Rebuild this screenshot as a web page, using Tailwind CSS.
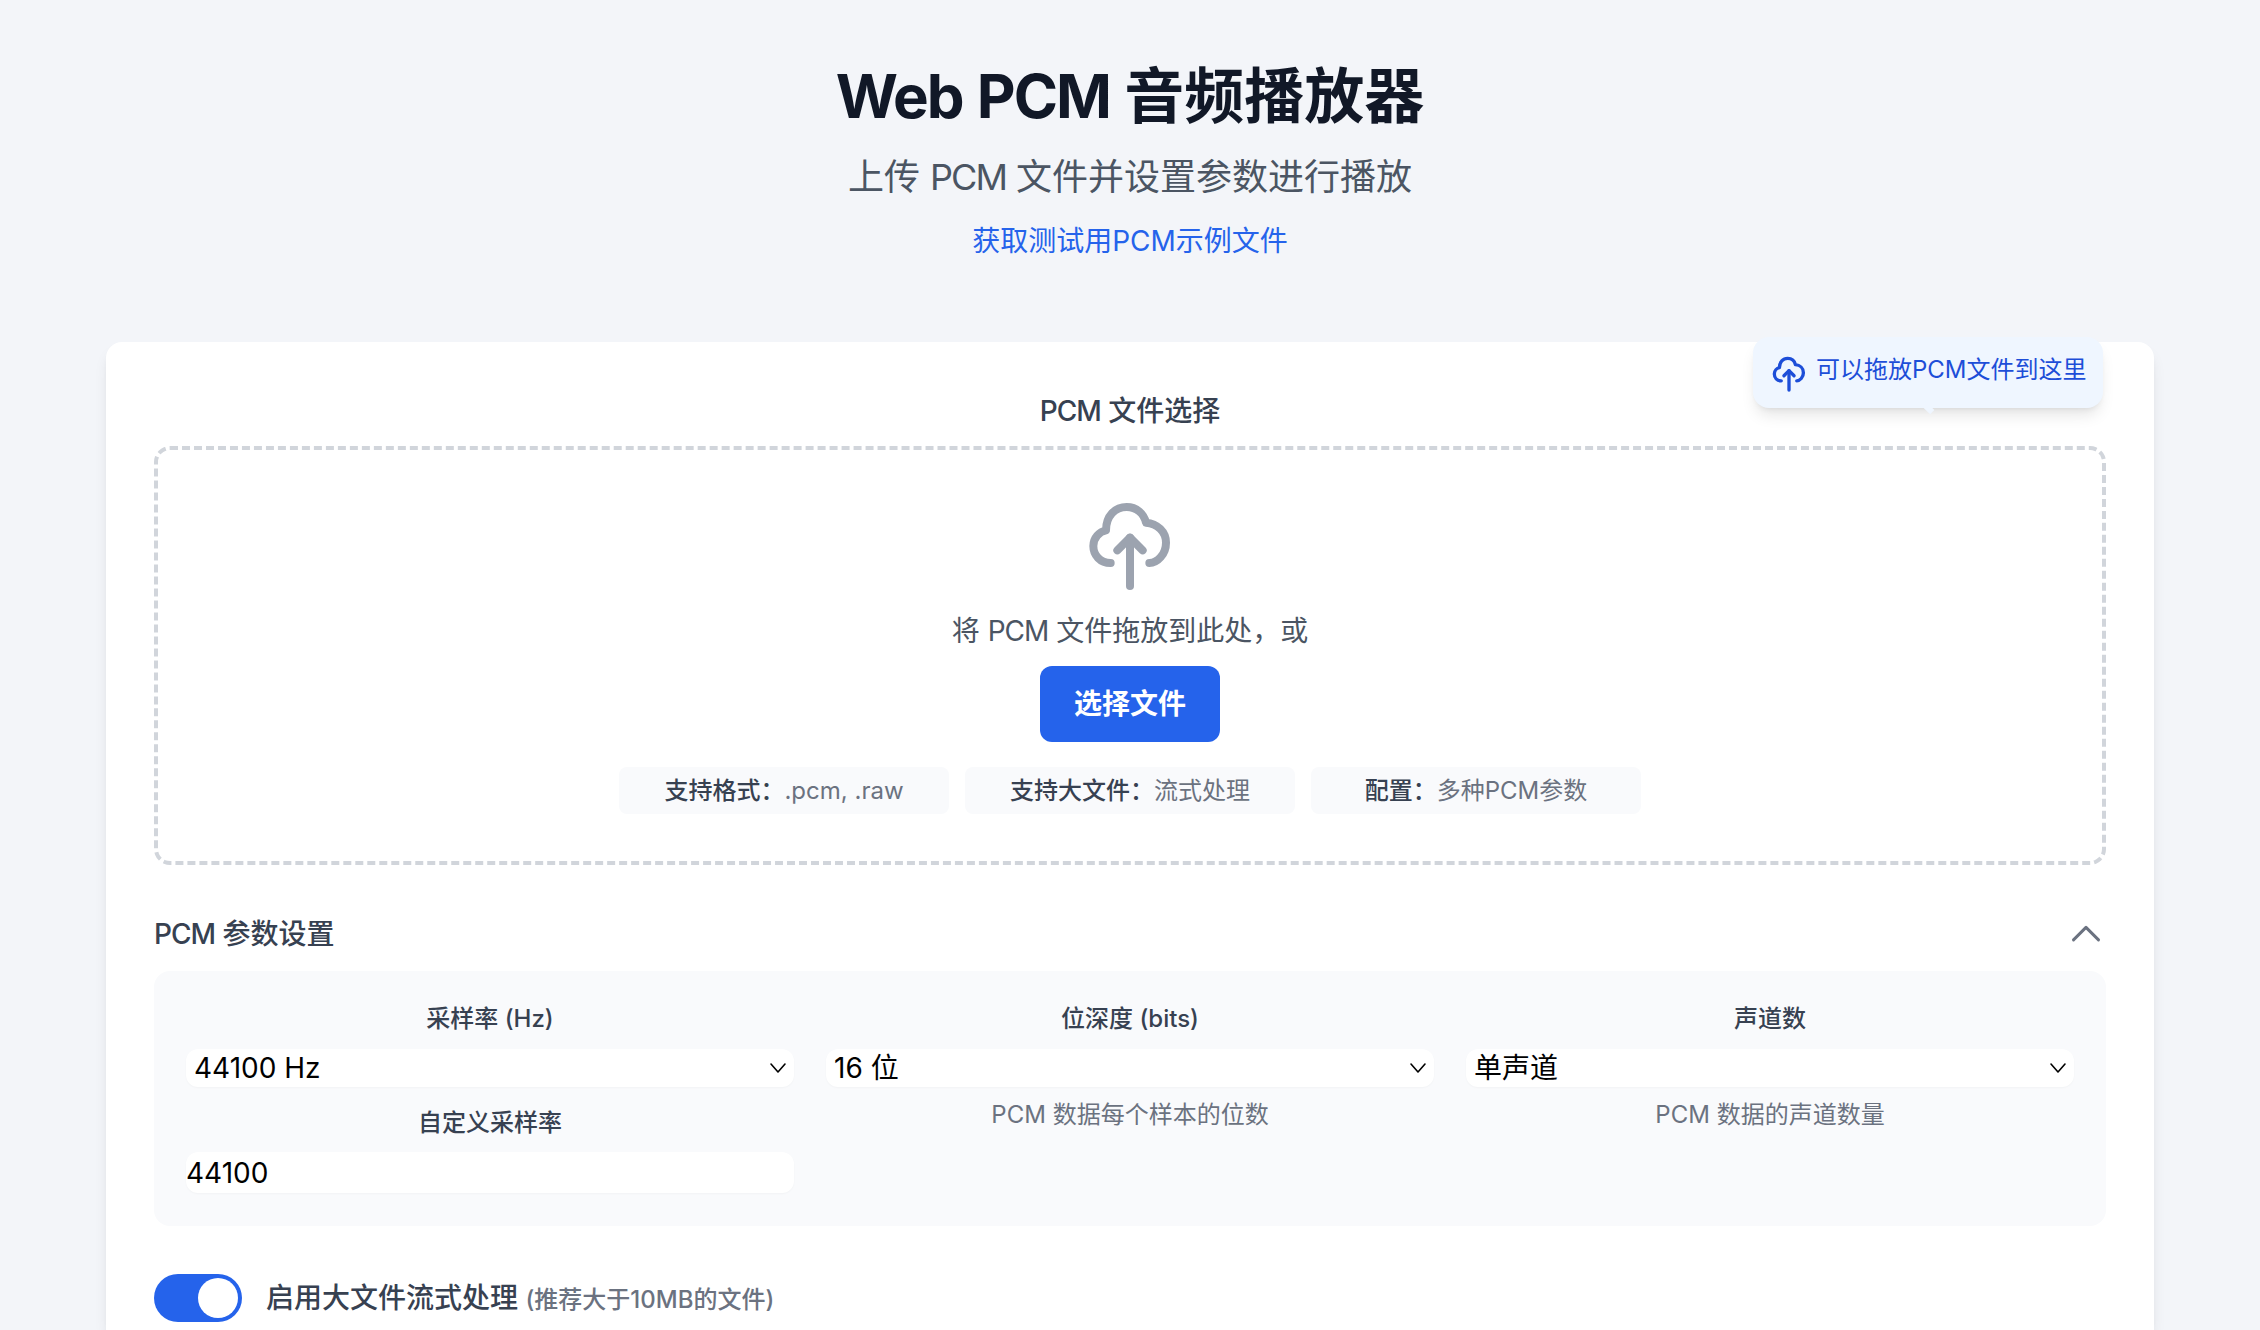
<!DOCTYPE html>
<html lang="zh">
<head>
<meta charset="utf-8">
<title>Web PCM 音频播放器</title>
<script src="https://cdn.jsdelivr.net/npm/@tailwindcss/browser@4"></script>
</head>
<body class="m-0 h-[1330px] overflow-hidden bg-[#f3f5f9] font-['Inter','Noto_Sans_CJK_SC',sans-serif] text-[#111827]">
<div class="mx-auto w-[2048px]">
  <header class="flex h-[342px] flex-col items-center pt-[56px]">
    <h1 class="text-[60px] font-bold leading-[80px] text-[#111827]"><span class="tracking-[-2px]">Web</span> <span class="tracking-[-2px]">PCM</span> 音频播放器</h1>
    <p class="mt-[17px] text-[36px] leading-[48px] text-[#4b5563]">上传 <span class="tracking-[-2px]">PCM</span> 文件并设置参数进行播放</p>
    <a class="mt-[20px] text-[28px] leading-[40px] text-[#2563eb]">获取测试用PCM示例文件</a>
  </header>
  <main class="relative h-[988px] rounded-t-[16px] bg-white px-[48px] shadow-lg">
    <div class="absolute right-[51px] top-[-5px] flex h-[71px] w-[350px] items-center gap-[3px] rounded-[16px] bg-[#eff6ff] pb-[6px] pl-[12px] text-[24px] text-[#1d4ed8] shadow-lg">
      <svg class="mt-[8px] h-[44px] w-[48px]" viewBox="0 0 360 330" fill="none" stroke="currentColor" stroke-width="25" stroke-linecap="round" stroke-linejoin="round"><path d="M122 216C90 216 70 192 70 165C70 140 88 122 108 118C108 75 135 48 170 48C200 48 222 68 228 95C262 98 288 122 288 155C288 190 262 216 238 216"/><path d="M180 285V140"/><path d="M142 178L180 140L218 178"/></svg>
      <span>可以拖放PCM文件到这里</span>
      <span class="absolute bottom-[-3px] left-[169px] h-[6px] w-[12px] rotate-45 bg-[#eff6ff]"></span>
    </div>
    <div class="pt-[49px] text-center text-[28px] font-medium leading-[40px] text-[#374151]"><span class="tracking-[-1px]">PCM</span> 文件选择</div>
    <section class="mt-[15px] flex h-[419px] flex-col items-center rounded-[16px] border-[4px] border-dashed border-[#d1d5db] pt-[41px]">
      <svg class="h-[110px] w-[120px] text-[#9ca3af]" viewBox="0 0 360 330" fill="none" stroke="currentColor" stroke-width="24" stroke-linecap="round" stroke-linejoin="round"><path d="M122 216C90 216 70 192 70 165C70 140 88 122 108 118C108 75 135 48 170 48C200 48 222 68 228 95C262 98 288 122 288 155C288 190 262 216 238 216"/><path d="M180 285V140"/><path d="M142 178L180 140L218 178"/></svg>
      <p class="mt-[10px] text-[28px] leading-[40px] text-[#4b5563]">将 <span class="tracking-[-1px]">PCM</span> 文件拖放到此处，或</p>
      <button class="mt-[15px] h-[76px] w-[180px] rounded-[12px] bg-[#2563eb] text-[28px] font-semibold text-white">选择文件</button>
      <div class="mt-[25px] flex gap-[16px] text-[24px] leading-[47px]">
        <div class="w-[330px] rounded-[8px] bg-[#f9fafc] text-center"><b class="font-medium text-[#374151]">支持格式：</b><span class="text-[#6b7280]">.pcm, .raw</span></div>
        <div class="w-[330px] rounded-[8px] bg-[#f9fafc] text-center"><b class="font-medium text-[#374151]">支持大文件：</b><span class="text-[#6b7280]">流式处理</span></div>
        <div class="w-[330px] rounded-[8px] bg-[#f9fafc] text-center"><b class="font-medium text-[#374151]">配置：</b><span class="text-[#6b7280]">多种PCM参数</span></div>
      </div>
    </section>
    <div class="mt-[49px] flex h-[40px] items-center justify-between text-[28px] font-medium text-[#374151]">
      <span><span class="tracking-[-1px]">PCM</span> 参数设置</span>
      <svg class="h-[40px] w-[40px] text-[#6b7280]" viewBox="0 0 24 24" fill="none" stroke="currentColor" stroke-width="1.8" stroke-linecap="round" stroke-linejoin="round"><path d="m4.5 15.5 7.5-7.5 7.5 7.5"/></svg>
    </div>
    <section class="mt-[17px] grid h-[255px] grid-cols-3 gap-x-[32px] rounded-[16px] bg-[#f9fafc] px-[32px] pt-[32px]">
      <div>
        <label class="block text-center text-[24px] font-medium leading-[32px] text-[#374151]">采样率 (Hz)</label>
        <div class="mt-[14px] flex h-[38px] items-center justify-between rounded-[12px] bg-white pl-[8px] pr-[6px] text-[28px] text-black shadow-[0_1px_2px_rgba(0,0,0,0.03)]"><span>44100 Hz</span><svg class="h-[20px] w-[20px]" viewBox="0 0 20 20" fill="none" stroke="currentColor" stroke-width="1.6" stroke-linecap="round" stroke-linejoin="round"><path d="m3 6 7 8 7-8"/></svg></div>
        <label class="mt-[20px] block text-center text-[24px] font-medium leading-[32px] text-[#374151]">自定义采样率</label>
        <div class="mt-[13px] flex h-[41px] items-center rounded-[12px] bg-white text-[28px] text-black shadow-[0_1px_2px_rgba(0,0,0,0.03)]">44100</div>
      </div>
      <div>
        <label class="block text-center text-[24px] font-medium leading-[32px] text-[#374151]">位深度 (bits)</label>
        <div class="mt-[14px] flex h-[38px] items-center justify-between rounded-[12px] bg-white pl-[8px] pr-[6px] text-[28px] text-black shadow-[0_1px_2px_rgba(0,0,0,0.03)]"><span>16 位</span><svg class="h-[20px] w-[20px]" viewBox="0 0 20 20" fill="none" stroke="currentColor" stroke-width="1.6" stroke-linecap="round" stroke-linejoin="round"><path d="m3 6 7 8 7-8"/></svg></div>
        <p class="mt-[12px] text-center text-[24px] leading-[32px] text-[#6b7280]">PCM 数据每个样本的位数</p>
      </div>
      <div>
        <label class="block text-center text-[24px] font-medium leading-[32px] text-[#374151]">声道数</label>
        <div class="mt-[14px] flex h-[38px] items-center justify-between rounded-[12px] bg-white pl-[8px] pr-[6px] text-[28px] text-black shadow-[0_1px_2px_rgba(0,0,0,0.03)]"><span>单声道</span><svg class="h-[20px] w-[20px]" viewBox="0 0 20 20" fill="none" stroke="currentColor" stroke-width="1.6" stroke-linecap="round" stroke-linejoin="round"><path d="m3 6 7 8 7-8"/></svg></div>
        <p class="mt-[12px] text-center text-[24px] leading-[32px] text-[#6b7280]">PCM 数据的声道数量</p>
      </div>
    </section>
    <div class="mt-[48px] flex items-center gap-[24px]">
      <div class="flex h-[48px] w-[88px] items-center justify-end rounded-full bg-[#2563eb] pr-[4px]"><span class="h-[40px] w-[40px] rounded-full bg-white"></span></div>
      <span class="text-[28px] font-medium text-[#374151]">启用大文件流式处理 <span class="text-[24px] text-[#6b7280]">(推荐大于10MB的文件)</span></span>
    </div>
  </main>
</div>
</body>
</html>
